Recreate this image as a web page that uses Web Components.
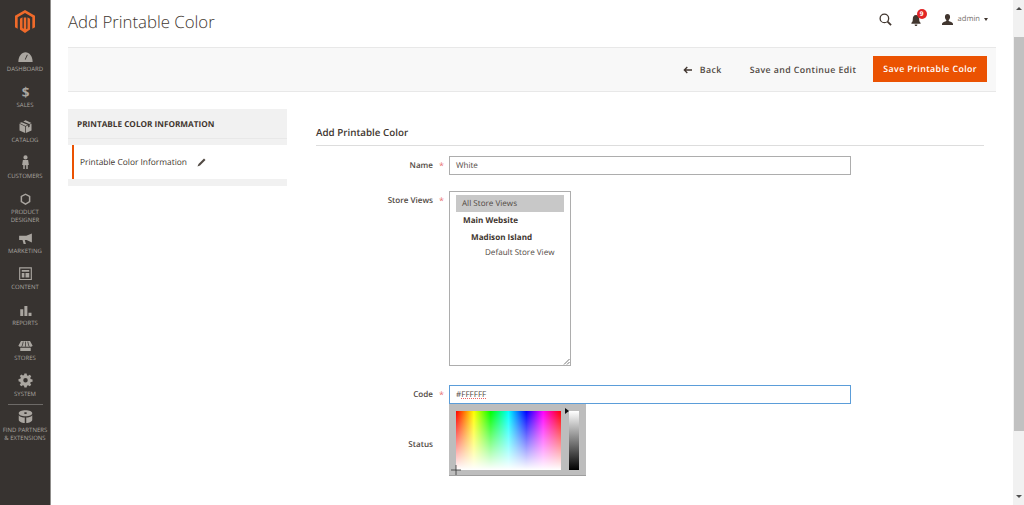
<!DOCTYPE html>
<html lang="en">
<head>
<meta charset="utf-8">
<title>Add Printable Color</title>
<style>
  html, body { margin: 0; height: 100%; overflow: hidden; }
  body { display: flex; height: 505px; font-family: "Open Sans", sans-serif; color: #41362f; background: #fff; text-rendering: geometricPrecision; }
</style>
</head>
<body>
<admin-sidebar></admin-sidebar>
<admin-page></admin-page>
<fake-scrollbar></fake-scrollbar>

<script>
const MENU_ICONS = {
  dashboard: '<path transform="translate(0 6)" d="M.5 14C.5 6 5 1 10 1s9.500 5 9.500 13zM10 11l3-6.500-1-.4-3 6.500z" fill-rule="evenodd"/>',
  sales: '<text x="10" y="18" text-anchor="middle" font-family="Open Sans" font-weight="700" font-size="18">$</text>',
  catalog: '<path transform="translate(0 2)" d="M10 1l8 3.500-3 1.500-8-3.500zM5 3.500l8 3.500-3 1.500-8-4zM2 5.500l7.500 3.700V18L2 14.500zM18 5.500V14.500L10.500 18V9.200l3-1.500v3l2-1v-3z"/>',
  customers: '<path transform="translate(0 1)" d="M10 .7a2.800 2.800 0 110 5.600 2.800 2.800 0 010-5.600zM6.500 7h7l1 6.500H13V19h-2v-5H9v5H7v-5.500H5.500z"/>',
  designer: '<path transform="translate(0 2)" d="M10 2.500l6.500 3.500v8L10 18l-6.500-4V6zM10 4.600L5.500 7.100v5.800l4.500 2.800 4.500-2.800V7.100z" fill-rule="evenodd"/>',
  marketing: '<path transform="translate(0 3)" d="M18.500 3v12l-7-3.200H9L10.500 17H7.500L6 11.800H1.500V6H11z"/>',
  content: '<path transform="translate(0 2)" d="M1.500 1h17v17h-17zM3 2.500v14h14v-14zM5 4.500h10v2.500H5zM5 8.500h3.500v6H5zM10 8.500h5v6h-5z" fill-rule="evenodd"/>',
  reports: '<path transform="translate(0 2)" d="M3 9h4v9H3zM8.500 4.500H12.500V18H8.500zM14 13.500h4V18h-4z"/>',
  stores: '<path transform="translate(0 2)" d="M4 4.500h12l3.500 6.500c-1 1.500-3 1.500-4.500.5-1 1-3.500 1-5 0-1.500 1-4 1-5 0C3.500 12.500 1.500 12.500.5 11zM3 13.500h14V18H3z"/><path transform="translate(0 2)" d="M7 5.500l-1.500 6M10 5.500v6M13 5.500l1.500 6" stroke="#373330" stroke-width="1" fill="none"/>',
  system: '<path transform="translate(0 1)" d="M8.500 1h3l.5 2.500 1.500.6 2.100-1.400 2.100 2.100-1.400 2.100.6 1.500 2.500.5v3l-2.500.5-.6 1.500 1.400 2.100-2.100 2.100-2.100-1.400-1.500.6-.5 2.500h-3l-.5-2.500-1.500-.6-2.100 1.400-2.100-2.100 1.400-2.100-.6-1.500L.7 11.400v-3l2.500-.5.6-1.500-1.400-2.100 2.100-2.100 2.100 1.400 1.500-.6zM10 7a3 3 0 100 6 3 3 0 000-6z" fill-rule="evenodd"/>',
  partners: '<path transform="translate(0 1)" d="M10 2c5 0 9 1.500 9 4s-4 4-9 4-9-1.500-9-4 4-4 9-4zM8.500 4.500v2.500h3V4.500zM1 8.500c2 2.500 5 3 8 3.100V19c-4-.5-8-2-8-4.500zM19 8.500v6c0 2.500-4 4-8 4.500v-7.400c3-.1 6-.6 8-3.100z" fill-rule="evenodd"/>'
};

class AdminSidebar extends HTMLElement {
  constructor() {
    super();
    this.attachShadow({ mode: 'open' });
  }

  item(icon, label, height) {
    return `<a class="item" style="height:${height}px">
      <svg viewBox="0 0 20 20" width="15" height="15" fill="#aaa6a0">${MENU_ICONS[icon]}</svg>
      <span>${label}</span>
    </a>`;
  }

  connectedCallback() {
    this.shadowRoot.innerHTML = `
      <style>
        :host { display: flex; flex-direction: column; align-items: center; flex: 0 0 51px; height: 505px; background: #373330; box-sizing: border-box; padding-top: 10px; border-right: 1px solid #8f8d8b; font-family: "Open Sans", sans-serif; }
        .logo { display: block; flex: none; margin-bottom: 14px; }
        .item { display: flex; flex-direction: column; align-items: center; width: 100%; flex: none; }
        .item svg { flex: none; display: block; overflow: visible; }
        .item span { color: #aaa6a0; font-size: 6px; line-height: 8px; text-transform: uppercase; text-align: center; margin-top: 3px; white-space: nowrap; }
        hr { width: 35px; border: 0; border-top: 1px solid #6d6a67; margin: 0 0 3px; flex: none; }
      </style>
      <svg class="logo" width="20" height="23" viewBox="0 0 21 24" fill="#ef6a2a">
        <path d="M10.500 0L21 6v12l-2.800 1.600V7.600L10.500 3.200 2.800 7.600v12L0 18V6z"/>
        <path d="M5.200 9l2.700-1.500v11.400l1.300.8V7.700h2.600v12.500l1.300-.8V7.500L15.800 9v11.500L10.500 24l-5.300-3.500z"/>
      </svg>
      ${this.item('dashboard', 'Dashboard', 36)}
      ${this.item('sales', 'Sales', 35)}
      ${this.item('catalog', 'Catalog', 36)}
      ${this.item('customers', 'Customers', 36)}
      ${this.item('designer', 'Product<br>Designer', 39)}
      ${this.item('marketing', 'Marketing', 36)}
      ${this.item('content', 'Content', 36)}
      ${this.item('reports', 'Reports', 35)}
      ${this.item('stores', 'Stores', 36)}
      ${this.item('system', 'System', 32)}
      <hr>
      ${this.item('partners', 'Find Partners<br>&amp; Extensions', 30)}
    `;
  }
}

class AdminHeader extends HTMLElement {
  constructor() {
    super();
    this.attachShadow({ mode: 'open' });
  }

  connectedCallback() {
    this.shadowRoot.innerHTML = `
      <style>
        :host { display: flex; align-items: center; height: 47px; box-sizing: border-box; padding: 0 25px 3px 17px; }
        h1 { flex: 1; margin: 0; font-size: 16.800px; font-weight: 300; color: #41362f; line-height: 1; }
        .tools { display: flex; align-items: center; margin-top: -6px; }
        .search { margin-right: 19px; display: block; }
        .bell { position: relative; width: 14px; height: 14px; margin-right: 17px; }
        .bell b { position: absolute; left: 6px; top: -3px; width: 10px; height: 10px; border-radius: 50%; background: #e22626; color: #fff; font-size: 6.500px; line-height: 10px; text-align: center; }
        .user { display: flex; align-items: center; font-size: 7.600px; color: #767069; }
        .user svg { margin-right: 5px; }
        .caret { width: 0; height: 0; margin-left: 4px; border: 2.500px solid transparent; border-top: 3px solid #41362f; border-bottom: 0; }
      </style>
      <h1>Add Printable Color</h1>
      <div class="tools">
        <svg class="search" width="13" height="13" viewBox="0 0 14 14" fill="none" stroke="#41362f">
          <circle cx="5.800" cy="5.800" r="4.600" stroke-width="1.400"/>
          <path d="M9.200 9.200L13 13" stroke-width="1.900"/>
        </svg>
        <div class="bell">
          <svg width="10" height="11" viewBox="0 0 10 12" fill="#41362f" style="display:block;margin-top:3px">
            <path d="M5 0c2.500 0 3.500 2 3.500 4.500 0 2 .5 3 1.500 4v1H0v-1c1-1 1.500-2 1.500-4C1.500 2 2.500 0 5 0zM3.500 10.300h3C6.500 11.400 5.800 12 5 12s-1.500-.6-1.500-1.700z"/>
          </svg>
          <b>9</b>
        </div>
        <div class="user">
          <svg width="11" height="11" viewBox="0 0 12 12" fill="#41362f"><path d="M6 0c1.800 0 2.800 1.300 2.800 3.200 0 1.500-.7 2.800-1.500 3.400v1c1.600.6 4.200 1.200 4.700 2.900V12H0v-1.500c.5-1.700 3.100-2.300 4.700-2.900v-1C3.900 6 3.200 4.700 3.200 3.200 3.200 1.300 4.200 0 6 0z"/></svg>
          <span>admin</span>
          <i class="caret"></i>
        </div>
      </div>
    `;
  }
}

class ActionBar extends HTMLElement {
  constructor() {
    super();
    this.attachShadow({ mode: 'open' });
  }

  connectedCallback() {
    this.shadowRoot.innerHTML = `
      <style>
        :host { display: flex; align-items: center; justify-content: flex-end; height: 45px; box-sizing: border-box; margin: 0 17px; padding-right: 9px; background: #f8f8f8; border-top: 1px solid #e8e8e8; border-bottom: 1px solid #e8e8e8; font-size: 8.800px; font-weight: 600; letter-spacing: .4px; color: #514943; }
        .back { display: flex; align-items: center; gap: 8px; margin-right: 28px; }
        .continue { margin-right: 17px; }
        .save { background: #eb5202; color: #fff; height: 26px; line-height: 26px; padding: 0 10px; margin-bottom: 1px; }
      </style>
      <span class="back">
        <svg width="9" height="8" viewBox="0 0 9 8" fill="none" stroke="#41362f" stroke-width="1.300"><path d="M9 4H1.500M4.300 1L1.300 4l3 3"/></svg>
        Back
      </span>
      <span class="continue">Save and Continue Edit</span>
      <span class="save">Save Printable Color</span>
    `;
  }
}

class TabPanel extends HTMLElement {
  constructor() {
    super();
    this.attachShadow({ mode: 'open' });
  }

  connectedCallback() {
    this.shadowRoot.innerHTML = `
      <style>
        :host { display: block; flex: 0 0 219px; box-sizing: border-box; height: 77px; background: #f1f1f1; color: #41362f; }
        .head { height: 30px; line-height: 31px; padding-left: 9px; font-size: 8.200px; font-weight: 700; border-bottom: 1px solid #e8e8e8; box-sizing: border-box; }
        .row { height: 34px; margin-top: 6px; background: #fff; padding-left: 4px; }
        .tab { display: flex; align-items: center; gap: 10px; height: 34px; border-left: 2px solid #eb5202; padding-left: 6px; font-size: 8.400px; color: #41362f; }
      </style>
      <div class="head">PRINTABLE COLOR INFORMATION</div>
      <div class="row">
        <div class="tab">
          <span>Printable Color Information</span>
          <svg width="9" height="9" viewBox="0 0 9 9" fill="#514943"><path d="M7 .5l1.500 1.500-5.500 5.500L.5 8.500l1-2.500z"/></svg>
        </div>
      </div>
    `;
  }
}

class FormRow extends HTMLElement {
  constructor() {
    super();
    this.attachShadow({ mode: 'open' });
  }

  connectedCallback() {
    const required = this.hasAttribute('required');
    this.shadowRoot.innerHTML = `
      <style>
        :host { display: grid; grid-template-columns: 117px 16px 1fr; position: relative; font-size: 8.100px; color: #41362f; }
        .label { text-align: right; font-weight: 600; line-height: 20px; height: 19px; color: #514943; }
        .star { color: #e87070; text-align: center; line-height: 20px; padding-left: 1px; font-size: 9px; height: 19px; }
      </style>
      <div class="label">${this.getAttribute('label')}</div>
      <div class="star">${required ? '*' : ''}</div>
      <div><slot></slot></div>
    `;
  }
}

class TextField extends HTMLElement {
  constructor() {
    super();
    this.attachShadow({ mode: 'open' });
  }

  connectedCallback() {
    const focused = this.hasAttribute('focused');
    this.shadowRoot.innerHTML = `
      <style>
        :host { display: block; width: 402px; height: 19px; box-sizing: border-box; border: 1px solid ${focused ? '#5b9dd9' : '#adadad'}; padding-left: 6px; font-size: 8.100px; line-height: 17px; color: #514943; background: #fff; }
        .spell { text-decoration: underline dotted #e66; text-decoration-thickness: 1px; text-underline-offset: 1px; }
      </style>
      ${focused ? '#<span class="spell">' + this.getAttribute('value').slice(1) + '</span>' : this.getAttribute('value')}
    `;
  }
}

class StoreSelect extends HTMLElement {
  constructor() {
    super();
    this.attachShadow({ mode: 'open' });
  }

  connectedCallback() {
    this.shadowRoot.innerHTML = `
      <style>
        :host { display: block; position: relative; width: 122px; height: 175px; box-sizing: border-box; border: 1px solid #adadad; padding: 3px 6px; font-size: 8.100px; color: #41362f; background: #fff; }
        div { white-space: nowrap; }
        .sel { background: #c8c8c8; height: 17px; line-height: 17px; padding-left: 6px; color: #514943; }
        .web { font-weight: 700; height: 16px; line-height: 17px; padding-left: 7px; }
        .grp { font-weight: 700; height: 19px; line-height: 20px; padding-left: 15px; }
        .view { height: 10px; line-height: 11px; padding-left: 29px; color: #514943; }
        svg { position: absolute; right: 0; bottom: 0; }
      </style>
      <div class="sel">All Store Views</div>
      <div class="web">Main Website</div>
      <div class="grp">Madison Island</div>
      <div class="view">Default Store View</div>
      <svg width="7" height="7" viewBox="0 0 7 7" stroke="#777" fill="none"><path d="M6.500 1L1 6.500M6.500 4L4 6.500"/></svg>
    `;
  }
}

class ColorPicker extends HTMLElement {
  constructor() {
    super();
    this.attachShadow({ mode: 'open' });
  }

  connectedCallback() {
    this.shadowRoot.innerHTML = `
      <style>
        :host { position: absolute; left: 133px; top: 19px; display: flex; box-sizing: border-box; width: 137px; height: 72px; padding: 7px 7px 6px; background: #bdbdbd; border-bottom: 1px solid #9e9e9e; z-index: 2; }
        .hue { position: relative; flex: none; width: 105px; height: 59px; background:
          linear-gradient(to bottom, rgba(255,255,255,0), #fff),
          linear-gradient(to right, #f00, #ff0 17%, #0f0 33%, #0ff 50%, #00f 67%, #f0f 83%, #f00); }
        .cross { position: absolute; left: -5px; bottom: -5px; }
        .arrow { width: 0; height: 0; margin: -3px 0 0 4px; border-left: 4px solid #111; border-top: 3px solid transparent; border-bottom: 3px solid transparent; flex: none; }
        .bright { flex: none; width: 10px; height: 59px; background: linear-gradient(#fff, #000); }
      </style>
      <div class="hue">
        <svg class="cross" width="10" height="10" viewBox="0 0 10 10" stroke="#333" stroke-width=".8"><path d="M5 0v10M0 5h10"/></svg>
      </div>
      <div class="arrow"></div>
      <div class="bright"></div>
    `;
  }
}

class AdminPage extends HTMLElement {
  constructor() {
    super();
    this.attachShadow({ mode: 'open' });
  }

  connectedCallback() {
    this.shadowRoot.innerHTML = `
      <style>
        :host { display: block; flex: 1; min-width: 0; }
        .cols { display: flex; padding: 17px 0 0 17px; }
        .form { margin-left: 29px; width: 668px; }
        h2 { margin: 0 0 10px; padding: 16.500px 0 6.500px; line-height: 13px; font-size: 9.800px; font-weight: 600; color: #41362f; border-bottom: 1px solid #ddd; }
        form-row { margin-bottom: 16px; }
        .status { height: 19px; }
      </style>
      <admin-header></admin-header>
      <action-bar></action-bar>
      <div class="cols">
        <tab-panel></tab-panel>
        <div class="form">
          <h2>Add Printable Color</h2>
          <form-row label="Name" required><text-field value="White"></text-field></form-row>
          <form-row label="Store Views" required><store-select></store-select></form-row>
          <form-row label="Code" required style="margin-top:19px;margin-bottom:31px">
            <text-field value="#FFFFFF" focused></text-field>
            <color-picker></color-picker>
          </form-row>
          <form-row label="Status"><div class="status"></div></form-row>
        </div>
      </div>
    `;
  }
}

class FakeScrollbar extends HTMLElement {
  constructor() {
    super();
    this.attachShadow({ mode: 'open' });
  }

  connectedCallback() {
    this.shadowRoot.innerHTML = `
      <style>
        :host { display: flex; flex-direction: column; align-items: stretch; flex: 0 0 11px; height: 505px; background: #f1f1f1; }
        .btn { height: 17px; flex: none; display: flex; align-items: center; justify-content: center; }
        .up { border-left: 3px solid transparent; border-right: 3px solid transparent; border-bottom: 3px solid #505050; }
        .down { border-left: 3px solid transparent; border-right: 3px solid transparent; border-top: 3px solid #505050; }
        .track { flex: 1; padding-top: 20px; }
        .thumb { height: 394px; margin-left: 1px; background: #c1c1c1; }
      </style>
      <div class="btn"><i class="up"></i></div>
      <div class="track"><div class="thumb"></div></div>
      <div class="btn"><i class="down"></i></div>
    `;
  }
}

customElements.define('admin-sidebar', AdminSidebar);
customElements.define('admin-header', AdminHeader);
customElements.define('action-bar', ActionBar);
customElements.define('tab-panel', TabPanel);
customElements.define('form-row', FormRow);
customElements.define('text-field', TextField);
customElements.define('store-select', StoreSelect);
customElements.define('color-picker', ColorPicker);
customElements.define('admin-page', AdminPage);
customElements.define('fake-scrollbar', FakeScrollbar);
</script>
</body>
</html>
